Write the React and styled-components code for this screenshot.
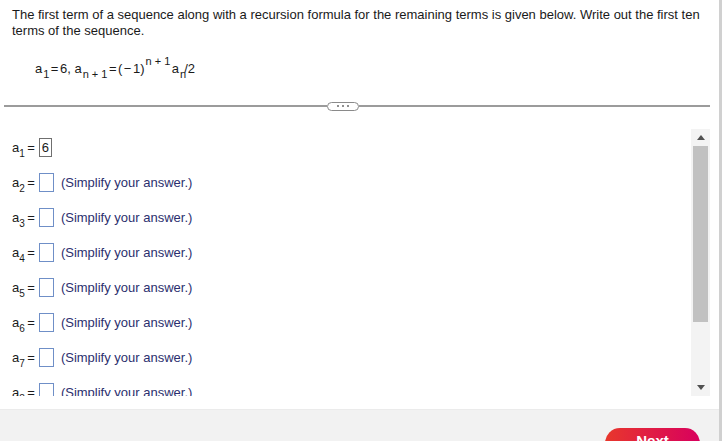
import React from "react";
import styled, { createGlobalStyle } from "styled-components";

const Global = createGlobalStyle`
  html, body { margin: 0; padding: 0; background: #ffffff; }
  body { font-family: Arial, "Liberation Sans", sans-serif; overflow: hidden; }
`;

const Frame = styled.div`
  width: 719px;
  height: 441px;
  border-right: 3px solid #d0d0d0;
  display: flex;
  flex-direction: column;
  overflow: hidden;
  background: #fff;
  & > * { flex-shrink: 0; }
`;

const Header = styled.div`
  padding: 7px 14px 0 12px;
  height: 99px;
  box-sizing: border-box;
`;

const Question = styled.p`
  margin: 0;
  font-size: 13px;
  line-height: 16px;
  color: #1a1a1a;
`;

const Formula = styled.div`
  margin: 22px 0 0 23px;
  font-size: 13px;
  line-height: 16px;
  color: #1a1a1a;
  white-space: nowrap;
`;

const Op = styled.span`
  margin: 0 ${(p) => p.$m || "1.5px"};
`;

const Sub = styled.span`
  font-size: ${(p) => (p.$small ? "10px" : "11px")};
  line-height: 0;
  position: relative;
  top: 5px;
  margin-left: ${(p) => (p.$tight ? "0" : "1px")};
  margin-right: ${(p) => p.$mr || "0"};
`;

const Sup = styled.span`
  font-size: 11px;
  line-height: 0;
  position: relative;
  top: -8px;
  margin-left: 1px;
  margin-right: 1.5px;
`;

const DividerRow = styled.div`
  display: flex;
  align-items: center;
  width: 706px;
  margin-left: 4px;
  height: 14px;
`;

const Rule = styled.div`
  height: 2px;
  background: #9b9b9b;
  flex: ${(p) => (p.$grow ? "1" : "0 0 323px")};
`;

const Pill = styled.div`
  width: 30px;
  height: 7px;
  border: 1px solid #8a8a8a;
  border-radius: 5px;
  display: flex;
  align-items: center;
  justify-content: center;
  gap: 3px;
  background: #fff;
`;

const Dot = styled.span`
  width: 2px;
  height: 2px;
  background: #6a6a6a;
  border-radius: 1px;
`;

const Body = styled.div`
  display: flex;
  height: 283px;
  overflow: hidden;
`;

const Content = styled.div`
  flex: 1;
  padding: 17px 0 0 12px;
`;

const Row = styled.div`
  display: flex;
  align-items: center;
  height: 35px;
  font-size: 13px;
  color: #1a1a1a;
`;

const Label = styled.span`
  white-space: nowrap;
  margin-right: 4px;
`;

const Eq = styled.span`
  margin-left: 2.5px;
`;

const Box = styled.span`
  box-sizing: border-box;
  min-width: ${(p) => (p.$filled ? "13px" : "15px")};
  height: 19px;
  border: 1px solid ${(p) => (p.$filled ? "#6f6f6f" : "#6f8fc7")};
  display: inline-flex;
  align-items: center;
  justify-content: center;
  font-size: 13px;
  color: #1a1a1a;
`;

const Hint = styled.span`
  margin-left: 7px;
  color: #2b2f6e;
  white-space: nowrap;
`;

const ScrollBar = styled.div`
  width: 19px;
  margin: 16px 9px 0 0;
  height: 267px;
  background: #f3f3f3;
  display: flex;
  flex-direction: column;
  align-items: center;
`;

const Arrow = styled.div`
  height: 17px;
  width: 100%;
  display: flex;
  align-items: center;
  justify-content: center;
`;

const Thumb = styled.div`
  width: 15px;
  height: 176px;
  background: #c1c1c1;
`;

const Spacer = styled.div`
  flex: 1;
`;

const Footer = styled.div`
  margin-top: 13px;
  height: 33px;
  box-sizing: border-box;
  overflow: hidden;
  background: #f2f2f2;
  border-top: 1px solid #ebebeb;
  display: flex;
  justify-content: flex-end;
  align-items: flex-start;
  padding: 18px 19px 0 0;
`;

const NextButton = styled.button`
  flex-shrink: 0;
  width: 95px;
  height: 30px;
  border: none;
  border-radius: 15px;
  background: linear-gradient(90deg, #e8372c 0%, #d8005e 100%);
  color: #fff;
  font-family: Arial, "Liberation Sans", sans-serif;
  font-weight: bold;
  font-size: 15px;
  line-height: 18px;
  padding: 4px 0 0;
  display: flex;
  justify-content: center;
  align-items: flex-start;
`;

const terms = [2, 3, 4, 5, 6, 7, 8];

export default function App() {
  return (
    <>
      <Global />
      <Frame>
        <Header>
          <Question>
            The first term of a sequence along with a recursion formula for the remaining terms is given below. Write out the first ten
            terms of the sequence.
          </Question>
          <Formula>
            a<Sub>1</Sub>
            <Op>=</Op>6, a<Sub>n + 1</Sub>
            <Op>=</Op>(<Op $m="1.5px">−</Op>1)<Sup>n + 1</Sup>a<Sub $mr="-2px">n</Sub>/2
          </Formula>
        </Header>
        <DividerRow>
          <Rule />
          <Pill>
            <Dot />
            <Dot />
            <Dot />
          </Pill>
          <Rule $grow />
        </DividerRow>
        <Body>
          <Content>
            <Row>
              <Label>
                a<Sub $small $tight>1</Sub>
                <Eq>=</Eq>
              </Label>
              <Box $filled>6</Box>
            </Row>
            {terms.map((n) => (
              <Row key={n}>
                <Label>
                  a<Sub $small $tight>{n}</Sub>
                  <Eq>=</Eq>
                </Label>
                <Box />
                <Hint>(Simplify your answer.)</Hint>
              </Row>
            ))}
          </Content>
          <ScrollBar>
            <Arrow>
              <svg width="8" height="5" viewBox="0 0 8 5">
                <path d="M0 5 L4 0 L8 5 Z" fill="#505050" />
              </svg>
            </Arrow>
            <Thumb />
            <Spacer />
            <Arrow>
              <svg width="8" height="5" viewBox="0 0 8 5">
                <path d="M0 0 L8 0 L4 5 Z" fill="#505050" />
              </svg>
            </Arrow>
          </ScrollBar>
        </Body>
        <Footer>
          <NextButton>Next</NextButton>
        </Footer>
      </Frame>
    </>
  );
}
